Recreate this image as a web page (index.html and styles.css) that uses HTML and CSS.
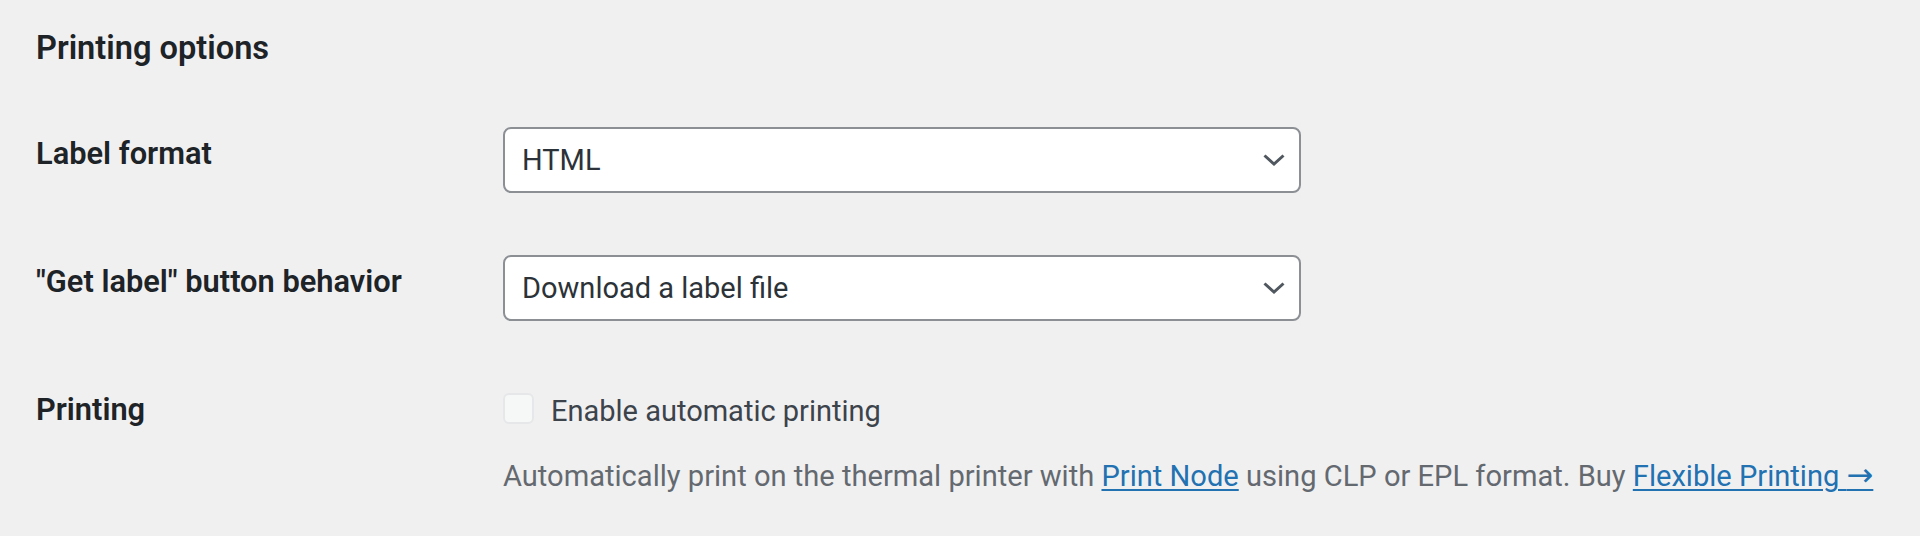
FILE: index.html
```html
<!DOCTYPE html>
<html lang="en">
<head>
<meta charset="UTF-8" />
<title>Printing options</title>
<link rel="stylesheet" href="styles.css">
</head>
<body>
<div class="wrap">
<h2 class="section-title">Printing options</h2>
<div class="form-table">
    <div class="row">
        <div class="th">Label format</div>
        <div class="td">
            <div class="select">
                <span>HTML</span>
                <svg class="chevron" viewBox="0 0 22 12" width="22" height="12"><polyline points="1.5,1.5 11,10 20.5,1.5" /></svg>
            </div>
        </div>
    </div>
    <div class="row">
        <div class="th">"Get label" button behavior</div>
        <div class="td">
            <div class="select">
                <span>Download a label file</span>
                <svg class="chevron" viewBox="0 0 22 12" width="22" height="12"><polyline points="1.5,1.5 11,10 20.5,1.5" /></svg>
            </div>
        </div>
    </div>
    <div class="row">
        <div class="th">Printing</div>
        <div class="td td-check">
            <label class="check">
                <span class="box"></span>
                <span>Enable automatic printing</span>
            </label>
            <p class="description">Automatically print on the thermal printer with <a href="#">Print Node</a> using CLP or EPL format. Buy <a href="#">Flexible Printing <span class="arrow">→</span></a></p>
        </div>
    </div>
</div>
</div>
</body>
</html>
```

FILE: styles.css
```css
body {
    margin: 0;
    background-color: #f0f0f1;
    font-family: Roboto, "Liberation Sans", sans-serif;
    color: #1d2327;
}
.wrap {
    padding-left: 36px;
}
.section-title {
    font-size: 32.6px;
    font-weight: 600;
    line-height: 38px;
    margin: 29px 0 29px;
}
.row {
    display: grid;
    grid-template-columns: 467px 798px;
    align-items: start;
}
.th {
    font-size: 30.8px;
    font-weight: 600;
    line-height: 40px;
    padding-top: 38px;
}
.td {
    padding: 31px 0;
}
.select {
    box-sizing: border-box;
    height: 66px;
    display: flex;
    align-items: center;
    justify-content: space-between;
    padding: 0 14px 0 17px;
    background-color: #fff;
    border: 2px solid #8c8f94;
    border-radius: 8px;
    font-size: 29px;
    color: #2c3338;
}
.chevron {
    fill: none;
    stroke: #50575e;
    stroke-width: 3;
}
.td-check {
    padding-top: 39px;
}
.check {
    display: flex;
    align-items: flex-start;
    gap: 17px;
    font-size: 29px;
    line-height: 40px;
    color: #3c434a;
    white-space: nowrap;
}
.box {
    box-sizing: border-box;
    width: 31px;
    height: 31px;
    margin-top: 2px;
    background-color: #f6f7f7;
    border: 2px solid #e6e7e9;
    border-radius: 6px;
}
.description {
    margin: 25px 0 0;
    font-size: 29.1px;
    line-height: 40px;
    color: #646970;
    white-space: nowrap;
}
.description a {
    color: #2271b1;
    text-decoration: underline;
    text-decoration-thickness: 2px;
    text-underline-offset: 3px;
}
.arrow {
    font-family: "DejaVu Sans", sans-serif;
    font-size: 32px;
    line-height: 1;
}
```
